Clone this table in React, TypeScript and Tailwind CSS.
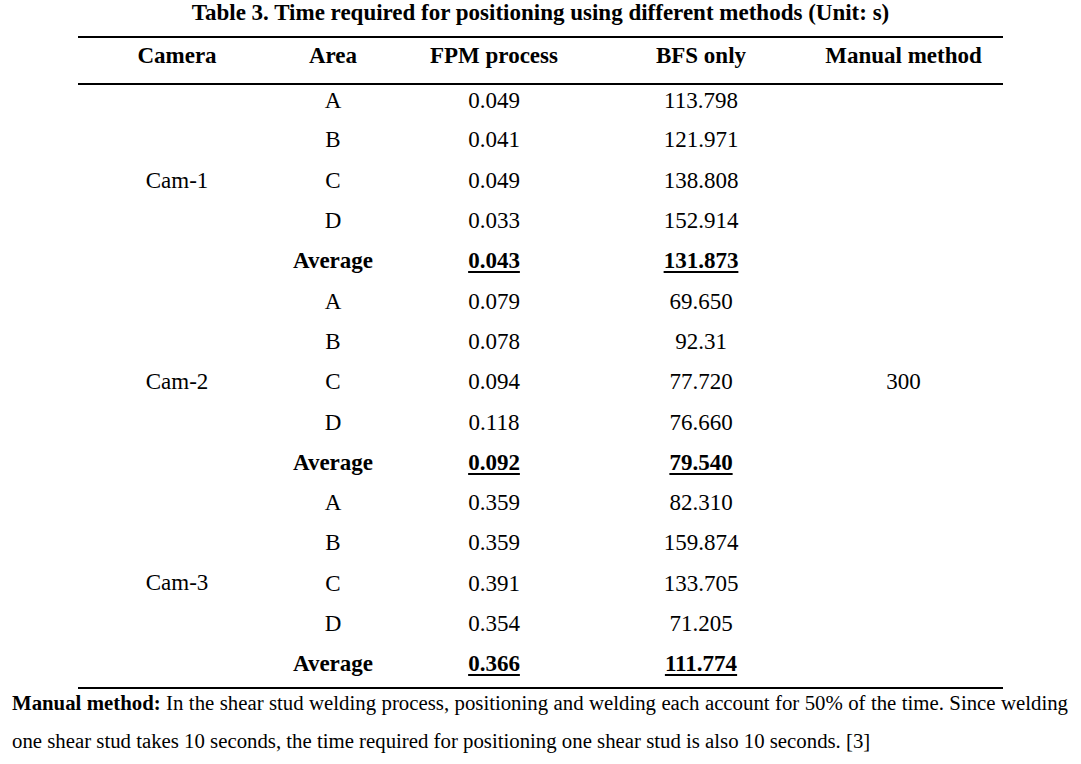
import React from 'react';

type Row = { area: string; fpm: string; bfs: string };

const groups: { camera: string; rows: Row[]; avg: { fpm: string; bfs: string } }[] = [
  {
    camera: 'Cam-1',
    rows: [
      { area: 'A', fpm: '0.049', bfs: '113.798' },
      { area: 'B', fpm: '0.041', bfs: '121.971' },
      { area: 'C', fpm: '0.049', bfs: '138.808' },
      { area: 'D', fpm: '0.033', bfs: '152.914' },
    ],
    avg: { fpm: '0.043', bfs: '131.873' },
  },
  {
    camera: 'Cam-2',
    rows: [
      { area: 'A', fpm: '0.079', bfs: '69.650' },
      { area: 'B', fpm: '0.078', bfs: '92.31' },
      { area: 'C', fpm: '0.094', bfs: '77.720' },
      { area: 'D', fpm: '0.118', bfs: '76.660' },
    ],
    avg: { fpm: '0.092', bfs: '79.540' },
  },
  {
    camera: 'Cam-3',
    rows: [
      { area: 'A', fpm: '0.359', bfs: '82.310' },
      { area: 'B', fpm: '0.359', bfs: '159.874' },
      { area: 'C', fpm: '0.391', bfs: '133.705' },
      { area: 'D', fpm: '0.354', bfs: '71.205' },
    ],
    avg: { fpm: '0.366', bfs: '111.774' },
  },
];

const cell = 'p-0 pb-[8px] text-center align-middle';
const head = 'p-0 pb-[10px] text-center align-middle';

export default function App() {
  return (
    <div className="w-[1081px] h-[764px] bg-white text-black font-['Liberation_Serif',serif] overflow-hidden">
      <h1 className="text-center font-bold text-[23px] leading-[26px] mb-[10px]">
        Table 3. Time required for positioning using different methods (Unit: s)
      </h1>

      <table className="ml-[78px] w-[925px] border-collapse table-fixed text-[23px] leading-[26px]">
        <colgroup>
          <col className="w-[198px]" />
          <col className="w-[114px]" />
          <col className="w-[208px]" />
          <col className="w-[206px]" />
          <col className="w-[199px]" />
        </colgroup>
        <thead>
          <tr className="h-[47px] border-t-2 border-b-2 border-black font-bold">
            <th className={head}>Camera</th>
            <th className={head}>Area</th>
            <th className={head}>FPM process</th>
            <th className={head}>BFS only</th>
            <th className={head}>Manual method</th>
          </tr>
        </thead>
        <tbody className="border-b-2 border-black">
          {groups.map((g, gi) => (
            <React.Fragment key={g.camera}>
              {g.rows.map((r, ri) => (
                <tr key={r.area} className="h-[40.3px]">
                  {ri === 0 && (
                    <td rowSpan={5} className={cell}>
                      {g.camera}
                    </td>
                  )}
                  <td className={cell}>{r.area}</td>
                  <td className={cell}>{r.fpm}</td>
                  <td className={cell}>{r.bfs}</td>
                  {gi === 0 && ri === 0 && (
                    <td rowSpan={15} className={cell}>
                      300
                    </td>
                  )}
                </tr>
              ))}
              <tr className="h-[40.3px] font-bold">
                <td className={cell}>Average</td>
                <td className={cell}>
                  <span className="underline decoration-2 underline-offset-[3px]">{g.avg.fpm}</span>
                </td>
                <td className={cell}>
                  <span className="underline decoration-2 underline-offset-[3px]">{g.avg.bfs}</span>
                </td>
              </tr>
            </React.Fragment>
          ))}
        </tbody>
      </table>

      <p className="pl-[12px] pr-[13px] text-[20.8px] leading-[38px] text-justify mt-[-5px]">
        <span className="font-bold">Manual method:</span> In the shear stud welding process, positioning and welding
        each account for 50% of the time. Since welding one shear stud takes 10 seconds, the time required for
        positioning one shear stud is also 10 seconds. [3]
      </p>
    </div>
  );
}
